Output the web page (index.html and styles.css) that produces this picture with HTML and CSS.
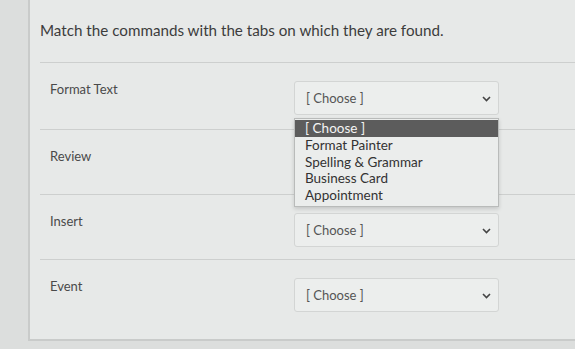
FILE: index.html
```html
<!DOCTYPE html>
<html lang="en">
<head>
  <meta charset="UTF-8">
  <title>Matching Question</title>
  <link rel="stylesheet" href="styles.css">
</head>
<body>
  <div class="card">
    <p class="prompt">Match the commands with the tabs on which they are found.</p>

    <div class="row">
      <span class="label">Format Text</span>
      <div class="picker">
        <div class="select">
          <span>[ Choose ]</span>
          <svg class="chevron" width="9" height="6" viewBox="0 0 9 6"><path d="M1 1l3.5 3.5L8 1" fill="none" stroke="#444" stroke-width="1.6"/></svg>
        </div>
        <!-- open dropdown for the first select -->
        <ul class="options">
          <li class="active">[ Choose ]</li>
          <li>Format Painter</li>
          <li>Spelling &amp; Grammar</li>
          <li>Business Card</li>
          <li>Appointment</li>
        </ul>
      </div>
    </div>

    <div class="row">
      <span class="label">Review</span>
      <!-- sits under the open list, so it isn't drawn -->
      <div class="picker covered">
        <div class="select">
          <span>[ Choose ]</span>
        </div>
      </div>
    </div>

    <div class="row">
      <span class="label">Insert</span>
      <div class="picker">
        <div class="select">
          <span>[ Choose ]</span>
          <svg class="chevron" width="9" height="6" viewBox="0 0 9 6"><path d="M1 1l3.5 3.5L8 1" fill="none" stroke="#444" stroke-width="1.6"/></svg>
        </div>
      </div>
    </div>

    <div class="row">
      <span class="label">Event</span>
      <div class="picker">
        <div class="select">
          <span>[ Choose ]</span>
          <svg class="chevron" width="9" height="6" viewBox="0 0 9 6"><path d="M1 1l3.5 3.5L8 1" fill="none" stroke="#444" stroke-width="1.6"/></svg>
        </div>
      </div>
    </div>
  </div>
</body>
</html>
```

FILE: styles.css
```css
body {
  margin: 0;
  font-family: Lato, "Liberation Sans", sans-serif;
  background-color: #dcdedd;
  color: #444;
  overflow: hidden;
}

.card {
  margin-left: 28px;
  padding: 20px 0 15px 10px;
  background-color: #e7e9e8;
  border-left: 2px solid #c9cbca;
  border-bottom: 2px solid #c9cbca;
}

.prompt {
  margin: 0 0 22px;
  font-size: 15.2px;
  line-height: 20px;
  color: #3c3c3c;
}

.row {
  display: flex;
  height: 65px;
  box-sizing: border-box;
  padding-top: 18px;
  border-top: 1px solid #cdcfce;
}

.row:first-of-type {
  height: 67px;
}

.label {
  width: 254px;
  padding-left: 10px;
  box-sizing: border-box;
  font-size: 13px;
  color: #4a4a4a;
}

.picker {
  position: relative;
}

.covered {
  visibility: hidden;
}

.select {
  display: flex;
  align-items: center;
  justify-content: space-between;
  width: 205px;
  height: 34px;
  box-sizing: border-box;
  padding: 0 7px 0 11px;
  background-color: #eceeed;
  border: 1px solid #d3d5d4;
  border-radius: 3px;
  font-size: 13px;
  color: #555;
}

.chevron {
  margin-top: 2px;
}

.options {
  position: absolute;
  top: 37px;
  left: 0;
  z-index: 2;
  width: 205px;
  box-sizing: border-box;
  margin: 0;
  padding: 1px 0 2px;
  list-style: none;
  background-color: #ebedec;
  border: 1px solid #b9bbba;
  box-shadow: 0 2px 4px rgba(0,0,0,0.15);
  font-size: 13.5px;
  line-height: 16.8px;
  color: #333;
}

.options li {
  padding-left: 10px;
}

.options .active {
  background-color: #5c5c5c;
  color: #f4f4f4;
}
```
